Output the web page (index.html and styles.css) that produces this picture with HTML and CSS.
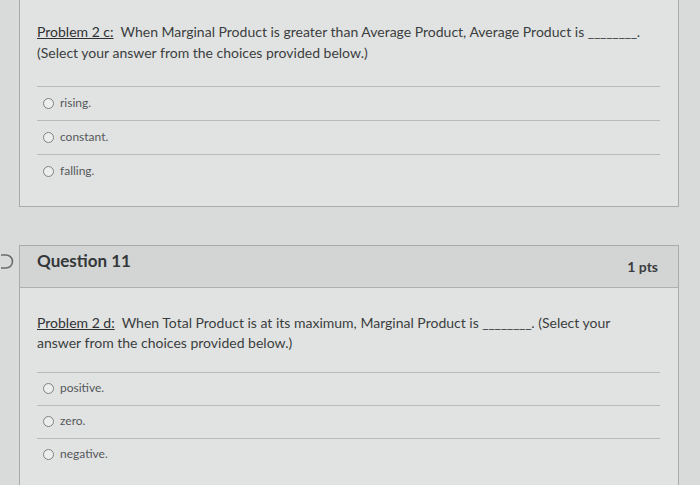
FILE: index.html
```html
<!DOCTYPE html>
<html>
<head>
<meta charset="utf-8">
<link rel="stylesheet" href="styles.css">
</head>
<body>
<div class="page">
  <section class="card card-first">
    <div class="question-text">
      <p><span class="label">Problem 2 c:</span> &nbsp;When Marginal Product is greater than Average Product, Average Product is <span class="blank">________</span>. (Select your answer from the choices provided below.)</p>
    </div>
    <div class="answers">
      <div class="answer"><span class="radio"></span><span class="answer-label">rising.</span></div>
      <div class="answer"><span class="radio"></span><span class="answer-label">constant.</span></div>
      <div class="answer"><span class="radio"></span><span class="answer-label">falling.</span></div>
    </div>
  </section>

  <section class="card card-second">
    <svg class="flag" width="14" height="18" viewBox="0 0 14 18">
      <path d="M-10 2 H5 A6.5 6.5 0 0 1 5 15 H-10" fill="none" stroke="#6a6d6f" stroke-width="1.6"/>
    </svg>
    <header class="card-header">
      <h2 class="q-title">Question 11</h2>
      <span class="pts">1 pts</span>
    </header>
    <div class="question-text second">
      <p><span class="label">Problem 2 d:</span> &nbsp;When Total Product is at its maximum, Marginal Product is <span class="blank">________</span>. (Select your answer from the choices provided below.)</p>
    </div>
    <div class="answers">
      <div class="answer"><span class="radio"></span><span class="answer-label">positive.</span></div>
      <div class="answer"><span class="radio"></span><span class="answer-label">zero.</span></div>
      <div class="answer"><span class="radio"></span><span class="answer-label">negative.</span></div>
    </div>
  </section>
</div>
</body>
</html>
```

FILE: styles.css
```css
html, body {
  margin: 0;
  padding: 0;
}
body {
  background: #d9dbda;
  font-family: Lato, "Open Sans", "Liberation Sans", sans-serif;
  color: #3b3e40;
  height: 485px;
  overflow: hidden;
}
.page {
  padding-left: 19px;
  width: 660px;
}
.card {
  background: #e1e3e2;
  border: 1px solid #a9abab;
  position: relative;
}
.card-first {
  border-top: none;
  padding-bottom: 18px;
}
.card-second {
  margin-top: 38px;
  height: 300px;
}
.question-text {
  padding: 21px 27px 0 17px;
}
.question-text p {
  margin: 0;
  font-size: 14px;
  line-height: 21px;
}
.question-text.second {
  padding-top: 25px;
}
.question-text.second p {
  line-height: 20px;
}
.label {
  text-decoration: underline;
  color: #2f3234;
}
.blank {
  letter-spacing: -0.3px;
}
.answers {
  margin: 23px 18px 0 17px;
}
.second + .answers {
  margin-top: 19px;
}
.answer {
  border-top: 1px solid #b9bbbb;
  display: flex;
  align-items: flex-start;
  padding-left: 6px;
  gap: 6px;
  box-sizing: border-box;
  height: 34px;
  padding-top: 8px;
}
.second + .answers .answer {
  height: 33px;
  padding-top: 7px;
}
.radio {
  width: 9px;
  height: 9px;
  margin-top: 3px;
  border: 1px solid #7f8284;
  border-radius: 50%;
  background: #eceeed;
  flex: none;
}
.answer-label {
  font-size: 12px;
  line-height: 15px;
  color: #55585a;
}
.card-header {
  background: #d3d5d4;
  border-bottom: 1px solid #aeb0b0;
  height: 41px;
  display: flex;
  align-items: flex-start;
  justify-content: space-between;
  padding: 0 20px 0 17px;
}
.q-title {
  margin: 5px 0 0;
  font-size: 17px;
  line-height: 20px;
  font-weight: 700;
  color: #343739;
}
.pts {
  margin-top: 12px;
  font-size: 14px;
  line-height: 18px;
  font-weight: 700;
  color: #3a3d3f;
}
.flag {
  position: absolute;
  left: -19px;
  top: 7px;
}
```
